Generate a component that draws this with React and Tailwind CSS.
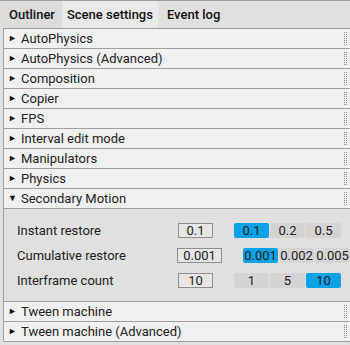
import React from "react";

const font = { fontFamily: "Roboto, 'Noto Sans', sans-serif" };

function Grip() {
  return (
    <div className="grid grid-cols-2 gap-x-[1px] gap-y-[1px] mr-[2px]">
      {Array.from({ length: 14 }).map((_, i) => (
        <div key={i} className="h-[1px] w-[1px] bg-[#8a8a8a]" />
      ))}
    </div>
  );
}

function Header({ title, open }) {
  return (
    <div className="flex h-[20px] items-center border-t border-[#a0a0a0] bg-[#f0f0f0] pl-[4px] pr-[1px]">
      <span className="w-[13px] text-[9px] leading-none text-[#111]">
        {open ? "▼" : "►"}
      </span>
      <span className="flex-1 text-[13px] leading-none text-[#222]">{title}</span>
      <Grip />
    </div>
  );
}

function Row({ label, value, options, selected, wide }) {
  return (
    <div className="flex h-[25px] items-center">
      <div className="w-[174px] pl-[13px] text-[13px] text-[#222]">{label}</div>
      <div
        className={`flex h-[15px] items-center justify-center border border-[#909090] bg-[#e6e6e6] text-[13px] text-[#222] ${
          wide ? "w-[45px]" : "w-[35px]"
        }`}
      >
        {value}
      </div>
      <div className="ml-[21px] flex gap-[1px]">
        {options.map((o) => (
          <div
            key={o}
            className={`flex h-[15px] w-[35px] items-center justify-center rounded-[2px] text-[13px] text-[#222] ${
              o === selected ? "bg-[#0aa2e6]" : "bg-[#d4d4d4]"
            }`}
          >
            {o}
          </div>
        ))}
      </div>
    </div>
  );
}

export default function App() {
  const closedTop = [
    "AutoPhysics",
    "AutoPhysics (Advanced)",
    "Composition",
    "Copier",
    "FPS",
    "Interval edit mode",
    "Manipulators",
    "Physics",
  ];
  return (
    <div className="h-[345px] w-[350px] overflow-hidden bg-[#e0e0e0]" style={font}>
      {/* Tabs */}
      <div className="flex h-[28px] border-t border-[#a0a0a0] bg-[#e0e0e0] text-[13px] font-medium text-[#111]">
        <div className="flex items-center bg-[#dcdcdc] pl-[9px] pr-[7px]">Outliner</div>
        <div className="flex items-center bg-[#e9e9e9] px-[5px]">Scene settings</div>
        <div className="flex items-center pl-[9px]">Event log</div>
      </div>

      <div className="ml-[3px] border-l border-[#a0a0a0]">
        {closedTop.map((t) => (
          <Header key={t} title={t} />
        ))}
        <Header title="Secondary Motion" open />
        <div className="border-t border-[#a0a0a0] bg-[#e0e0e0] pb-[8px] pt-[9px]">
          <Row label="Instant restore" value="0.1" options={["0.1", "0.2", "0.5"]} selected="0.1" />
          <Row
            label="Cumulative restore"
            value="0.001"
            options={["0.001", "0.002", "0.005"]}
            selected="0.001"
            wide
          />
          <Row label="Interframe count" value="10" options={["1", "5", "10"]} selected="10" />
        </div>
        <Header title="Tween machine" />
        <Header title="Tween machine (Advanced)" />
        <div className="border-t border-[#a0a0a0]" />
      </div>
    </div>
  );
}
